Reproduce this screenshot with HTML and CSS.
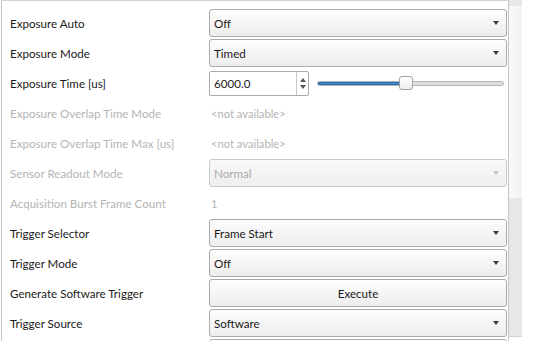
FILE: index.html
```html
<!DOCTYPE html>
<html>
<head>
<meta charset="utf-8">
<link rel="stylesheet" href="styles.css">
</head>
<body>
<div class="panel">
  <div class="list">
    <div class="row">
      <div class="label">Exposure Auto</div>
      <div class="value"><div class="combo"><span>Off</span><span class="arrow"></span></div></div>
    </div>
    <div class="row">
      <div class="label">Exposure Mode</div>
      <div class="value"><div class="combo"><span>Timed</span><span class="arrow"></span></div></div>
    </div>
    <div class="row">
      <div class="label">Exposure Time [us]</div>
      <div class="value split">
        <div class="spin">
          <span class="spin-text">6000.0</span>
          <span class="spin-btns"><span class="up"></span><span class="down"></span></span>
        </div>
        <div class="slider">
          <div class="groove"><div class="fill" style="width:84px"></div></div>
          <div class="handle" style="left:82px"></div>
        </div>
      </div>
    </div>
    <div class="row disabled">
      <div class="label">Exposure Overlap Time Mode</div>
      <div class="value"><span class="plain">&lt;not available&gt;</span></div>
    </div>
    <div class="row disabled">
      <div class="label">Exposure Overlap Time Max [us]</div>
      <div class="value"><span class="plain">&lt;not available&gt;</span></div>
    </div>
    <div class="row disabled">
      <div class="label">Sensor Readout Mode</div>
      <div class="value"><div class="combo off"><span>Normal</span><span class="arrow"></span></div></div>
    </div>
    <div class="row disabled">
      <div class="label">Acquisition Burst Frame Count</div>
      <div class="value"><span class="plain">1</span></div>
    </div>
    <div class="row">
      <div class="label">Trigger Selector</div>
      <div class="value"><div class="combo"><span>Frame Start</span><span class="arrow"></span></div></div>
    </div>
    <div class="row">
      <div class="label">Trigger Mode</div>
      <div class="value"><div class="combo"><span>Off</span><span class="arrow"></span></div></div>
    </div>
    <div class="row">
      <div class="label">Generate Software Trigger</div>
      <div class="value"><div class="button">Execute</div></div>
    </div>
    <div class="row">
      <div class="label">Trigger Source</div>
      <div class="value"><div class="combo"><span>Software</span><span class="arrow"></span></div></div>
    </div>
    <div class="row">
      <div class="label"></div>
      <div class="value"><div class="combo"></div></div>
    </div>
  </div>
  <div class="scrollbar"><div class="thumb"></div></div>
</div>
</body>
</html>
```
FILE: styles.css
```css
html, body {
  margin: 0;
  padding: 0;
  background: #ffffff;
}
body {
  font-family: "Lato", "Liberation Sans", sans-serif;
  font-size: 11.6px;
  color: #1a1a1a;
  overflow: hidden;
  height: 341px;
}
.panel {
  display: flex;
  align-items: flex-start;
  margin-left: 1px;
  width: 521px;
  height: 341px;
  overflow: hidden;
}
.list {
  width: 506px;
  height: 420px;
  border-left: 1px solid #c4c4c4;
  border-top: 1px solid #d4d4d4;
  border-right: 1px solid #c4c4c4;
  padding-top: 7px;
  box-sizing: content-box;
}
.row {
  display: grid;
  grid-template-columns: 207px 1fr;
  height: 30px;
  align-items: center;
}
.label {
  padding-left: 8px;
  white-space: nowrap;
}
.value {
  padding-right: 1px;
  min-width: 0;
}
.disabled .label,
.disabled .plain {
  color: #b4b4b4;
}
.plain {
  padding-left: 2px;
  font-size: 11.2px;
}
.combo, .button {
  height: 28px;
  box-sizing: border-box;
  border: 1px solid #ababab;
  border-radius: 3px;
  background: linear-gradient(#fdfdfd, #ededed);
  display: flex;
  align-items: center;
  justify-content: space-between;
  padding: 0 7px 0 4px;
}
.combo.off {
  border-color: #cbcbcb;
  background: linear-gradient(#f8f8f8, #efefef);
  color: #ababab;
}
.arrow {
  width: 0;
  height: 0;
  border-left: 3.5px solid transparent;
  border-right: 3.5px solid transparent;
  border-top: 4px solid #3c3c3c;
}
.combo.off .arrow {
  border-top-color: #c4c4c4;
}
.button {
  justify-content: center;
  padding: 0;
  border-color: #a8a8a8;
}
.split {
  display: flex;
  align-items: center;
  gap: 8px;
}
.spin {
  width: 100px;
  height: 25px;
  box-sizing: border-box;
  border: 1px solid #ababab;
  border-radius: 2px;
  background: #fff;
  display: flex;
  align-items: stretch;
}
.spin-text {
  flex: 1;
  display: flex;
  align-items: center;
  padding-left: 4px;
  color: #222;
}
.spin-btns {
  width: 11px;
  border-left: 1px solid #c8c8c8;
  display: flex;
  flex-direction: column;
  align-items: center;
  justify-content: center;
  gap: 3px;
}
.up, .down {
  width: 0;
  height: 0;
  border-left: 3px solid transparent;
  border-right: 3px solid transparent;
}
.up { border-bottom: 4px solid #555; }
.down { border-top: 4px solid #555; }
.slider {
  position: relative;
  width: 187px;
  height: 14px;
  display: flex;
  align-items: center;
}
.groove {
  width: 100%;
  height: 5px;
  box-sizing: border-box;
  border: 1px solid #b4b4b4;
  border-radius: 3px;
  background: #dedede;
  overflow: hidden;
}
.fill {
  height: 100%;
  background: #3d8fd6;
  box-shadow: inset 0 0 0 1px #2a6ca8;
}
.handle {
  position: absolute;
  top: 0;
  width: 14px;
  height: 14px;
  box-sizing: border-box;
  border: 1px solid #a2a2a2;
  border-radius: 3px;
  background: linear-gradient(#ffffff, #ececec);
}
.scrollbar {
  width: 13px;
  height: 337px;
  background: #e7e7e7;
  padding-top: 6px;
  box-sizing: border-box;
  border-bottom: 1px solid #d4d4d4;
}
.thumb {
  height: 192px;
  background: linear-gradient(90deg, #f9f9f9, #f3f3f3);
}
```
